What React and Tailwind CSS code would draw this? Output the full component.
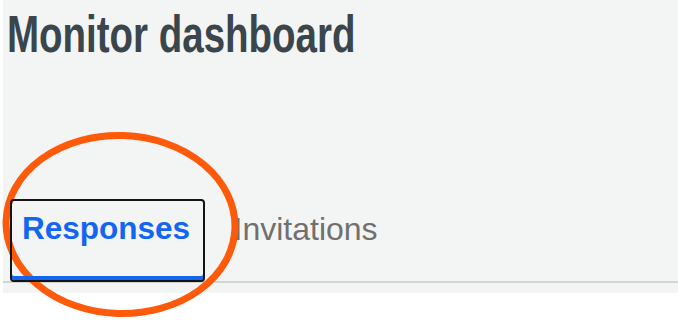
export default function App() {
  return (
    <div className="relative w-[678px] h-[320px] bg-white overflow-hidden" style={{ fontFamily: '"Liberation Sans", Arial, sans-serif' }}>
      <div className="ml-[3px] h-[293px] bg-[#f3f5f4] pt-[8px]">
        <h1 className="ml-[3.5px] text-[52px] leading-none font-bold text-[#3a454c] whitespace-nowrap origin-left scale-x-[0.74]">
          Monitor dashboard
        </h1>

        <div className="mt-[139px] pl-[7px] h-[84px] flex items-start border-b-2 border-[#d3d4d4]">
          <div className="relative z-10 w-[195px] h-[83px] border-2 border-[#141414] rounded-[4px] pl-[10px] pt-[11.5px] shadow-[inset_0_-4px_0_#1266f1]">
            <span className="block text-[31.5px] leading-none font-bold text-[#1266f1]">Responses</span>
          </div>
          <div className="ml-[28.5px] pt-[14px]">
            <span className="block text-[32px] leading-none text-[#707070]">Invitations</span>
          </div>
        </div>
      </div>

      <svg className="absolute left-0 top-0 pointer-events-none" width="678" height="320">
        <ellipse cx="120.5" cy="224.5" rx="114.5" ry="89" fill="none" stroke="#ff5a0a" strokeWidth="7" transform="rotate(2 120.5 224.5)" />
      </svg>
    </div>
  );
}
